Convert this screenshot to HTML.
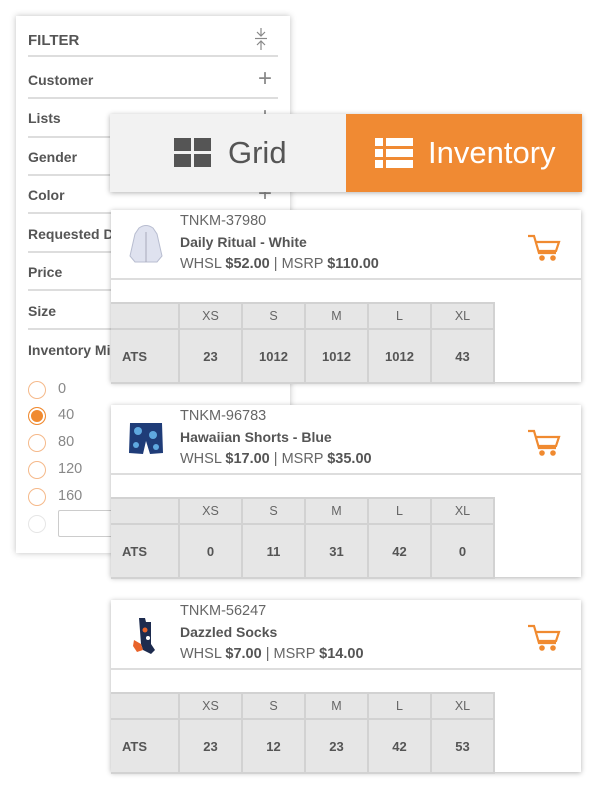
<!DOCTYPE html>
<html><head><style>
*{margin:0;padding:0;box-sizing:border-box}
body{width:600px;height:800px;background:#fff;position:relative;overflow:hidden;font-family:"Liberation Sans",sans-serif;color:#555}
.abs{position:absolute}
.panel{left:16px;top:16px;width:274px;height:537px;background:#fff;box-shadow:0 0 6px rgba(0,0,0,.25)}
.row{position:absolute;left:12px;width:250px;font-size:14px;font-weight:bold;color:#555}
.line{position:absolute;left:12px;width:250px;height:2px;background:#ddd}
.plus{position:absolute;right:6px;top:-3px;font-size:24px;font-weight:normal;color:#888;line-height:20px}
.radio{position:absolute;left:12px;width:18px;height:18px;border:1.5px solid #f5b98a;border-radius:50%}
.rl{position:absolute;left:42px;font-size:14.5px;color:#888}
.toggle{left:110px;top:114px;width:472px;height:78px;box-shadow:0 1px 5px rgba(0,0,0,.3);display:flex}
.card{position:absolute;left:111px;width:470px;height:172px;background:#fff;box-shadow:0 1px 5px rgba(0,0,0,.3)}
.hdr{position:absolute;left:0;top:0;width:470px;height:70px;border-bottom:2px solid #ddd}
.sku{position:absolute;left:69px;top:3px;font-size:14.5px;color:#666}
.nm{position:absolute;left:69px;top:24px;font-size:14px;font-weight:bold;color:#555}
.pr{position:absolute;left:69px;top:46px;font-size:14.5px;color:#666}
.pr b{color:#555}
table{position:absolute;left:0;top:92px;border-collapse:collapse;background:#e6e6e6}
td{border:2px solid #d2d2d2;text-align:center;font-size:13px;color:#666}
tr.h td{height:26px;font-size:12.5px}
tr.d td{height:54px;font-weight:bold;color:#555}
td.f{width:68px;text-align:left;padding-left:11px;border-left:none}
td.c{width:63px}
.cart{position:absolute;left:416px;top:24px}
</style></head><body>
<div class="abs panel">
 <div class="row" style="top:16px;font-size:15px">FILTER
  <svg class="abs" style="right:10px;top:-4px" width="14" height="22"><g stroke="#888" stroke-width="1.2" fill="none"><line x1="7" y1="0" x2="7" y2="8"/><line x1="7" y1="13" x2="7" y2="22"/><line x1="1" y1="10.5" x2="13" y2="10.5"/><path d="M3 4 L7 8 L11 4 M3 17 L7 13 L11 17"/></g></svg>
 </div>
 <div class="line" style="top:39px"></div>
 <div class="row" style="top:56px">Customer<span class="plus">+</span></div>
 <div class="line" style="top:81px"></div>
 <div class="row" style="top:94px">Lists<span class="plus">+</span></div>
 <div class="line" style="top:120px"></div>
 <div class="row" style="top:133px">Gender<span class="plus">+</span></div>
 <div class="line" style="top:158px"></div>
 <div class="row" style="top:171px">Color<span class="plus">+</span></div>
 <div class="line" style="top:196px"></div>
 <div class="row" style="top:210px">Requested Date</div>
 <div class="line" style="top:235px"></div>
 <div class="row" style="top:248px">Price</div>
 <div class="line" style="top:273px"></div>
 <div class="row" style="top:287px">Size</div>
 <div class="line" style="top:312px"></div>
 <div class="row" style="top:326px">Inventory Min</div>
 <div class="radio" style="top:365px"></div><div class="rl" style="top:365px">0</div>
 <div class="radio" style="top:391px;border-color:#f08a30;box-shadow:inset 0 0 0 2px #fff;background:#f08a30"></div><div class="rl" style="top:391px">40</div>
 <div class="radio" style="top:418px"></div><div class="rl" style="top:418px">80</div>
 <div class="radio" style="top:445px"></div><div class="rl" style="top:445px">120</div>
 <div class="radio" style="top:472px"></div><div class="rl" style="top:472px">160</div>
 <div class="radio" style="top:499px;border-color:#e6e6e6"></div>
 <div class="abs" style="left:42px;top:494px;width:80px;height:27px;border:1px solid #ccc;border-radius:2px"></div>
</div>

<div class="abs toggle">
 <div style="width:236px;background:#f2f2f2;position:relative">
  <svg class="abs" style="left:64px;top:24px" width="38" height="30"><rect x="0" y="0" width="17" height="13" fill="#555"/><rect x="20" y="0" width="17" height="13" fill="#555"/><rect x="0" y="16" width="17" height="13" fill="#555"/><rect x="20" y="16" width="17" height="13" fill="#555"/></svg>
  <div class="abs" style="left:118px;top:21px;font-size:31px;color:#555">Grid</div>
 </div>
 <div style="width:236px;background:#f08a33;position:relative">
  <svg class="abs" style="left:29px;top:24px" width="38" height="30"><g fill="#fff"><rect x="0" y="0" width="8" height="8"/><rect x="11" y="0" width="27" height="8"/><rect x="0" y="11" width="8" height="8"/><rect x="11" y="11" width="27" height="8"/><rect x="0" y="22" width="8" height="8"/><rect x="11" y="22" width="27" height="8"/></g></svg>
  <div class="abs" style="left:82px;top:21px;font-size:31px;color:#fff">Inventory</div>
 </div>
</div>

<div class="card" style="top:210px">
 <div class="hdr">
  <svg class="abs" style="left:16px;top:14px" width="38" height="42"><path d="M12 4 Q19 -1 26 4 L30 10 L35 32 L30 38 L8 38 L3 32 L8 10Z" fill="#dfe2ef" stroke="#b8bdd0"/><line x1="19" y1="8" x2="19" y2="38" stroke="#aab"/></svg>
  <div class="sku">TNKM-37980</div><div class="nm">Daily Ritual - White</div>
  <div class="pr">WHSL <b>$52.00</b> | MSRP <b>$110.00</b></div>
  <svg class="cart" width="34" height="28"><path d="M1 2 L7 2 L12 19 L29 19 M9 8 L32 8 L29 17 L12 17" fill="none" stroke="#f08a30" stroke-width="2.2"/><circle cx="15" cy="24" r="2.8" fill="#f08a30"/><circle cx="26" cy="24" r="2.8" fill="#f08a30"/></svg>
 </div>
 <table><tr class="h"><td class="f"></td><td class="c">XS</td><td class="c">S</td><td class="c">M</td><td class="c">L</td><td class="c">XL</td></tr>
 <tr class="d"><td class="f">ATS</td><td>23</td><td>1012</td><td>1012</td><td>1012</td><td>43</td></tr></table>
</div>

<div class="card" style="top:405px">
 <div class="hdr">
  <svg class="abs" style="left:17px;top:16px" width="36" height="36"><path d="M2 2 L34 2 L35 32 L22 33 L18 20 L15 33 L1 32Z" fill="#1f3c78"/><circle cx="10" cy="10" r="4" fill="#5fa8e0"/><circle cx="25" cy="14" r="4" fill="#5fa8e0"/><circle cx="8" cy="24" r="3" fill="#5fa8e0"/><circle cx="28" cy="26" r="3" fill="#5fa8e0"/></svg>
  <div class="sku">TNKM-96783</div><div class="nm">Hawaiian Shorts - Blue</div>
  <div class="pr">WHSL <b>$17.00</b> | MSRP <b>$35.00</b></div>
  <svg class="cart" width="34" height="28"><path d="M1 2 L7 2 L12 19 L29 19 M9 8 L32 8 L29 17 L12 17" fill="none" stroke="#f08a30" stroke-width="2.2"/><circle cx="15" cy="24" r="2.8" fill="#f08a30"/><circle cx="26" cy="24" r="2.8" fill="#f08a30"/></svg>
 </div>
 <table><tr class="h"><td class="f"></td><td class="c">XS</td><td class="c">S</td><td class="c">M</td><td class="c">L</td><td class="c">XL</td></tr>
 <tr class="d"><td class="f">ATS</td><td>0</td><td>11</td><td>31</td><td>42</td><td>0</td></tr></table>
</div>

<div class="card" style="top:600px">
 <div class="hdr">
  <svg class="abs" style="left:20px;top:14px" width="30" height="42"><path d="M8 4 L14 4 L15 8 L20 8 L20 30 L24 36 L20 40 L12 36 L10 30Z" fill="#1d2b4e"/><path d="M3 26 L10 30 L12 36 L6 38 L2 32Z" fill="#e8632a"/><circle cx="14" cy="16" r="2.5" fill="#e8632a"/><circle cx="17" cy="24" r="2" fill="#fff"/></svg>
  <div class="sku">TNKM-56247</div><div class="nm">Dazzled Socks</div>
  <div class="pr">WHSL <b>$7.00</b> | MSRP <b>$14.00</b></div>
  <svg class="cart" width="34" height="28"><path d="M1 2 L7 2 L12 19 L29 19 M9 8 L32 8 L29 17 L12 17" fill="none" stroke="#f08a30" stroke-width="2.2"/><circle cx="15" cy="24" r="2.8" fill="#f08a30"/><circle cx="26" cy="24" r="2.8" fill="#f08a30"/></svg>
 </div>
 <table><tr class="h"><td class="f"></td><td class="c">XS</td><td class="c">S</td><td class="c">M</td><td class="c">L</td><td class="c">XL</td></tr>
 <tr class="d"><td class="f">ATS</td><td>23</td><td>12</td><td>23</td><td>42</td><td>53</td></tr></table>
</div>
</body></html>
